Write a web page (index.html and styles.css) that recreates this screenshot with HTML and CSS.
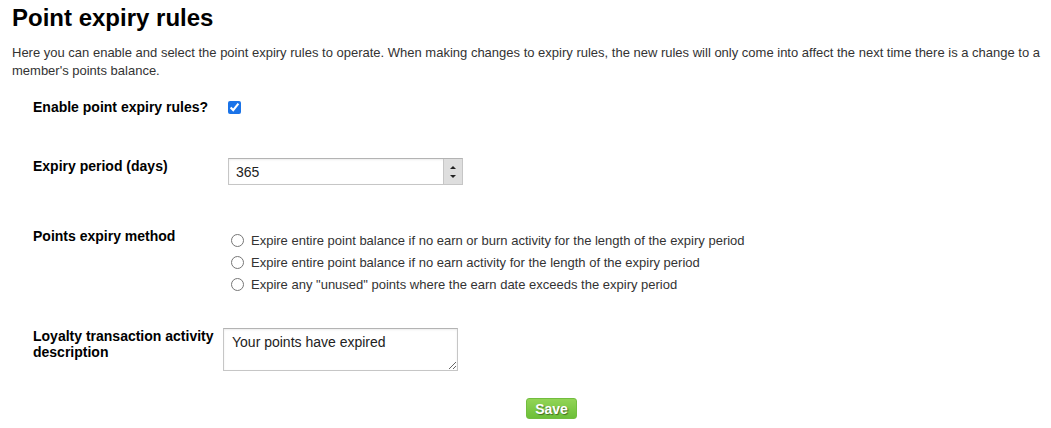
FILE: index.html
```html
<!DOCTYPE html>
<html lang="en">
<head>
<meta charset="utf-8">
<title>Point expiry rules</title>
<link rel="stylesheet" href="styles.css">
</head>
<body>
<h1 class="title">Point expiry rules</h1>
<p class="intro">Here you can enable and select the point expiry rules to operate. When making changes to expiry rules, the new rules will only come into affect the next time there is a change to a member's points balance.</p>
<form class="form">
  <div class="row row-enable">
    <label class="label" for="enable">Enable point expiry rules?</label>
    <input class="check" type="checkbox" id="enable" checked>
  </div>
  <div class="row row-period">
    <label class="label" for="period">Expiry period (days)</label>
    <div class="number">
      <input class="number-input" type="text" id="period" value="365">
      <div class="spinner">
        <span class="arrow-up"></span>
        <span class="arrow-down"></span>
      </div>
    </div>
  </div>
  <div class="row row-method">
    <div class="label">Points expiry method</div>
    <div class="radios">
      <label class="radio-row"><input class="radio" type="radio" name="method">Expire entire point balance if no earn or burn activity for the length of the expiry period</label>
      <label class="radio-row"><input class="radio" type="radio" name="method">Expire entire point balance if no earn activity for the length of the expiry period</label>
      <label class="radio-row"><input class="radio" type="radio" name="method">Expire any "unused" points where the earn date exceeds the expiry period</label>
    </div>
  </div>
  <div class="row row-desc">
    <label class="label" for="desc">Loyalty transaction activity description</label>
    <textarea class="textarea" id="desc">Your points have expired</textarea>
  </div>
  <div class="actions">
    <button class="save" type="button">Save</button>
  </div>
</form>
</body>
</html>
```

FILE: styles.css
```css
html, body {
  margin: 0;
  background: #ffffff;
}
body {
  padding: 4px 8px 0 12px;
  font-family: Arial, "Liberation Sans", sans-serif;
  color: #333333;
}
.title {
  margin: 0;
  font-size: 24px;
  line-height: 28px;
  font-weight: bold;
  color: #000000;
}
.intro {
  margin: 12px 0 0;
  font-size: 13px;
  line-height: 18px;
  color: #333333;
}
.form {
  margin: 0 0 0 21px;
}
.row {
  display: flex;
  align-items: flex-start;
}
.label {
  width: 190px;
  flex: 0 0 190px;
  font-size: 14px;
  font-weight: bold;
  line-height: 16px;
  color: #000000;
}
.row-enable {
  margin-top: 17px;
  height: 20px;
}
.row-enable .label {
  line-height: 20px;
}
.check {
  width: 13px;
  height: 13px;
  margin: 4px 0 0 5px;
  accent-color: #1a73e8;
}
.row-period {
  margin-top: 41px;
}
.number {
  margin-left: 5px;
  width: 235px;
  height: 27px;
  box-sizing: border-box;
  border: 1px solid #c6c6c6;
  border-top-color: #b3b3b3;
  box-shadow: inset 0 1px 2px rgba(0,0,0,0.08);
  display: flex;
  background: #ffffff;
}
.number-input {
  flex: 1;
  min-width: 0;
  border: 0;
  outline: none;
  padding: 0 0 0 7px;
  margin: 0;
  font-family: Arial, "Liberation Sans", sans-serif;
  font-size: 14px;
  color: #222222;
  background: transparent;
}
.spinner {
  width: 18px;
  border-left: 1px solid #c6c6c6;
  background: #dedede;
  display: flex;
  flex-direction: column;
  align-items: center;
  justify-content: center;
  gap: 6px;
}
.arrow-up {
  width: 0;
  height: 0;
  border-left: 3px solid transparent;
  border-right: 3px solid transparent;
  border-bottom: 3px solid #222222;
}
.arrow-down {
  width: 0;
  height: 0;
  border-left: 3px solid transparent;
  border-right: 3px solid transparent;
  border-top: 3px solid #222222;
}
.row-method {
  margin-top: 43px;
}
.radios {
  margin: 1px 0 0 8px;
  display: flex;
  flex-direction: column;
}
.radio-row {
  height: 22px;
  display: flex;
  align-items: center;
  gap: 7px;
  font-size: 13px;
  color: #333333;
}
.radio {
  width: 13px;
  height: 13px;
  margin: 0;
}
.row-desc {
  margin-top: 33px;
}
.textarea {
  width: 235px;
  height: 43px;
  box-sizing: border-box;
  margin: 0;
  padding: 5px 8px;
  border: 1px solid #c6c6c6;
  border-top-color: #b3b3b3;
  box-shadow: inset 0 1px 2px rgba(0,0,0,0.08);
  font-family: Arial, "Liberation Sans", sans-serif;
  font-size: 14px;
  line-height: 16px;
  color: #222222;
}
.actions {
  margin-top: 27px;
  padding-left: 493px;
}
.save {
  width: 51px;
  height: 21px;
  padding: 0;
  border: 1px solid #72bd3f;
  border-radius: 3px;
  background: linear-gradient(#92d456, #6cbf38);
  color: #ffffff;
  font-family: Arial, "Liberation Sans", sans-serif;
  font-size: 14px;
  font-weight: bold;
  text-shadow: 1px 1px 1px rgba(0,0,0,0.45);
  cursor: pointer;
}
```
